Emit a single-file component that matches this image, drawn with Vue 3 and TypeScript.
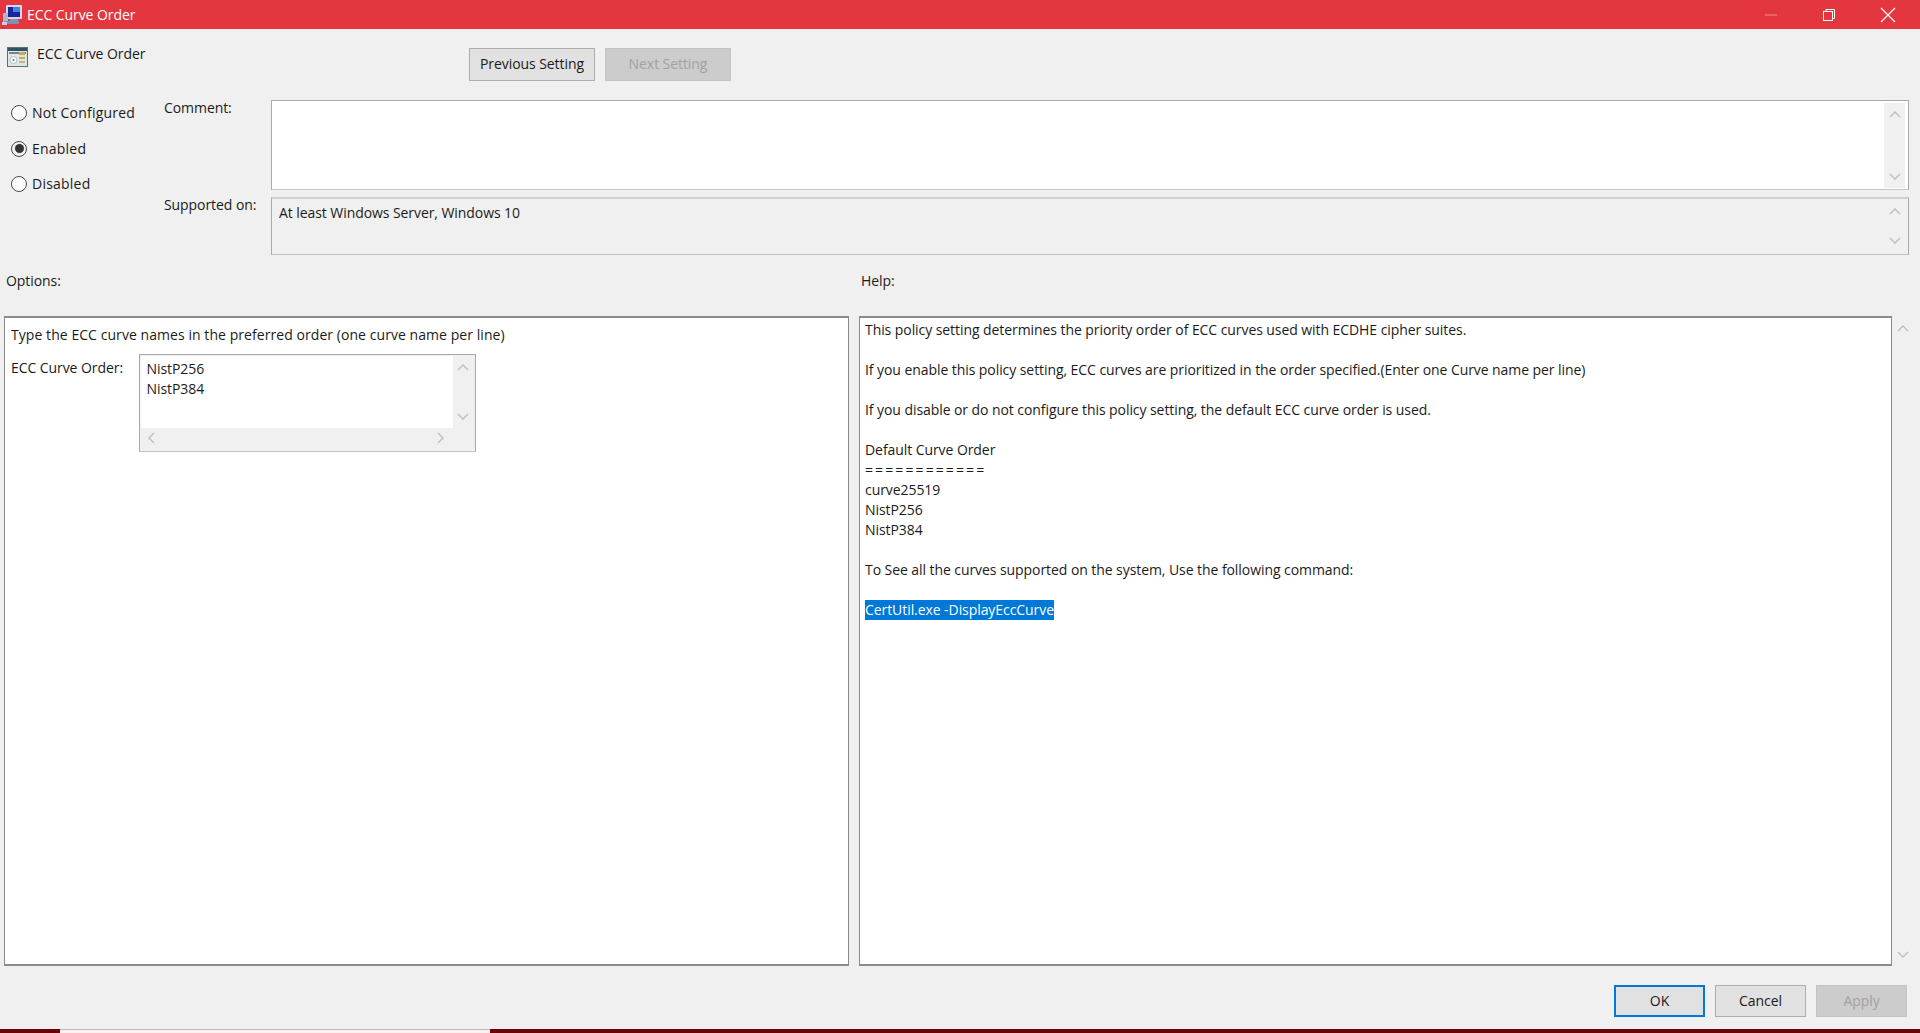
<script setup lang="ts">
const radios = [
  { label: 'Not Configured', checked: false },
  { label: 'Enabled', checked: true },
  { label: 'Disabled', checked: false },
]
const helpLines: string[] = [
  'This policy setting determines the priority order of ECC curves used with ECDHE cipher suites.',
  '',
  'If you enable this policy setting, ECC curves are prioritized in the order specified.(Enter one Curve name per line)',
  '',
  'If you disable or do not configure this policy setting, the default ECC curve order is used.',
  '',
  'Default Curve Order',
  '============',
  'curve25519',
  'NistP256',
  'NistP384',
  '',
  'To See all the curves supported on the system, Use the following command:',
  '',
]
</script>

<template>
  <div class="window">
    <header class="titlebar">
      <svg class="app-icon" width="20" height="20" viewBox="0 0 20 20">
        <rect x="4" y="0" width="16" height="14" rx="1" fill="#d3d8e2" />
        <rect x="6" y="2" width="12" height="10" fill="#17269a" />
        <rect x="11" y="2" width="7" height="5" fill="#3f86e8" />
        <rect x="8" y="14" width="8" height="2" fill="#8c96ad" />
        <rect x="1" y="8" width="5" height="9" fill="#aeb9cf" />
        <rect x="2" y="16" width="15" height="3" rx="1" fill="#7f8fb0" />
        <rect x="0" y="17" width="5" height="3" fill="#c4d2ea" />
      </svg>
      <span class="title">ECC Curve Order</span>
      <div class="controls">
        <span class="ctl">
          <svg width="14" height="14" viewBox="0 0 14 14"><path d="M1 7h12" stroke="#f28b8b" fill="none" /></svg>
        </span>
        <span class="ctl">
          <svg width="14" height="14" viewBox="0 0 14 14" fill="none" stroke="#fff">
            <rect x="1.5" y="3.5" width="9" height="9" />
            <path d="M4 3.5V1.5h8.5V10.5H10.5" />
          </svg>
        </span>
        <span class="ctl">
          <svg width="16" height="16" viewBox="0 0 16 16" fill="none" stroke="#fff" stroke-width="1.2"><path d="M1 1l14 14M15 1L1 15" /></svg>
        </span>
      </div>
    </header>

    <section class="head">
      <svg class="policy-icon" width="21" height="20" viewBox="0 0 21 20">
        <rect x="0.5" y="0.5" width="20" height="19" fill="#dfe6e8" stroke="#56707a" />
        <rect x="1" y="1" width="19" height="3" fill="#33525f" />
        <rect x="2" y="5" width="17" height="2" fill="#6f8790" />
        <rect x="12" y="5" width="6" height="3" fill="#d2a94e" />
        <circle cx="6.5" cy="13" r="3.5" fill="#f7f7f7" stroke="#b7c0c4" />
        <circle cx="6.5" cy="13" r="1" fill="#5d7480" />
        <rect x="12" y="10" width="6" height="2" fill="#c7ab61" />
        <rect x="12" y="14" width="6" height="2" fill="#c9b77d" />
      </svg>
      <span class="policy-name">ECC Curve Order</span>
      <div class="nav">
        <button class="btn">Previous Setting</button>
        <button class="btn disabled">Next Setting</button>
      </div>
    </section>

    <section class="settings">
      <div class="radios">
        <label v-for="r in radios" :key="r.label" class="radio">
          <span class="dot" :class="{ on: r.checked }"></span>
          <span class="radio-text">{{ r.label }}</span>
        </label>
      </div>
      <div class="field-label">Comment:</div>
      <div class="field comment">
        <div class="field-body"></div>
        <div class="vscroll comment-scroll">
          <svg class="chev" width="12" height="7" viewBox="0 0 12 7"><path d="M1 6l5-5 5 5" /></svg>
          <svg class="chev" width="12" height="7" viewBox="0 0 12 7"><path d="M1 1l5 5 5-5" /></svg>
        </div>
      </div>
      <div class="field-label">Supported on:</div>
      <div class="field supported">
        <div class="field-body supported-text">At least Windows Server, Windows 10</div>
        <div class="vscroll supported-scroll">
          <svg class="chev" width="12" height="7" viewBox="0 0 12 7"><path d="M1 6l5-5 5 5" /></svg>
          <svg class="chev" width="12" height="7" viewBox="0 0 12 7"><path d="M1 1l5 5 5-5" /></svg>
        </div>
      </div>
    </section>

    <section class="captions">
      <span class="cap-options">Options:</span>
      <span>Help:</span>
    </section>

    <section class="panels">
      <div class="panel options">
        <div class="opt-intro">Type the ECC curve names in the preferred order (one curve name per line)</div>
        <div class="opt-row">
          <span class="opt-label">ECC Curve Order:</span>
          <div class="listbox">
            <div class="list-body">
              <div>NistP256</div>
              <div>NistP384</div>
            </div>
            <div class="vscroll list-v">
              <svg class="chev" width="12" height="7" viewBox="0 0 12 7"><path d="M1 6l5-5 5 5" /></svg>
              <svg class="chev" width="12" height="7" viewBox="0 0 12 7"><path d="M1 1l5 5 5-5" /></svg>
            </div>
            <div class="hscroll">
              <svg class="chev" width="7" height="12" viewBox="0 0 7 12"><path d="M6 1L1 6l5 5" /></svg>
              <svg class="chev" width="7" height="12" viewBox="0 0 7 12"><path d="M1 1l5 5-5 5" /></svg>
            </div>
          </div>
        </div>
      </div>
      <div class="panel help">
        <div
          v-for="(line, i) in helpLines"
          :key="i"
          class="help-line"
          :class="{ rule: line.startsWith('=') }"
        >{{ line }}</div>
        <div class="help-line"><span class="selected">CertUtil.exe -DisplayEccCurve</span></div>
      </div>
      <div class="vscroll help-scroll">
        <svg class="chev" width="12" height="7" viewBox="0 0 12 7"><path d="M1 6l5-5 5 5" /></svg>
        <svg class="chev" width="12" height="7" viewBox="0 0 12 7"><path d="M1 1l5 5 5-5" /></svg>
      </div>
    </section>

    <footer class="actions">
      <button class="btn act default">OK</button>
      <button class="btn act">Cancel</button>
      <button class="btn act disabled">Apply</button>
    </footer>

    <div class="strip">
      <span class="strip-dark first"></span>
      <span class="strip-light"></span>
      <span class="strip-dark rest"></span>
    </div>
  </div>
</template>

<style scoped>
.window {
  width: 1920px;
  height: 1033px;
  overflow: hidden;
  display: flex;
  flex-direction: column;
  background: #f0f0f0;
  color: #1b1b1b;
  font-family: "Open Sans", "Noto Sans", sans-serif;
  font-size: 14px;
  line-height: 20px;
  letter-spacing: -0.07px;
}
.titlebar {
  height: 29px;
  flex: none;
  display: flex;
  align-items: center;
  background: #e4363e;
  color: #fff;
  padding-left: 2px;
}
.app-icon {
  flex: none;
  margin-right: 5px;
}
.controls {
  margin-left: auto;
  display: flex;
  padding-right: 3px;
}
.ctl {
  width: 58.5px;
  height: 29px;
  display: flex;
  align-items: center;
  justify-content: center;
}
.head {
  height: 71px;
  flex: none;
  display: flex;
  align-items: flex-start;
  padding-left: 7px;
}
.policy-icon {
  margin-top: 18px;
  flex: none;
}
.policy-name {
  margin-left: 9px;
  margin-top: 15px;
}
.nav {
  display: flex;
  gap: 10px;
  margin-left: auto;
  margin-right: 1189px;
  margin-top: 19px;
}
.btn {
  width: 126px;
  height: 33px;
  padding: 0 0 2px;
  border: 1px solid #adadad;
  background: #e1e1e1;
  color: #1b1b1b;
  font: inherit;
  letter-spacing: inherit;
}
.btn.disabled {
  background: #cccccc;
  border-color: #c4c4c4;
  color: #a2a2a2;
}
.settings {
  flex: none;
  display: grid;
  grid-template-columns: 164px 107px 1fr;
  grid-template-rows: 90px 58px;
  row-gap: 7px;
  padding-right: 11px;
}
.radios {
  grid-row: 1 / span 2;
  display: flex;
  flex-direction: column;
  gap: 15.5px;
  padding: 3px 0 0 11px;
}
.radio {
  display: flex;
  align-items: center;
  gap: 5px;
  height: 20px;
}
.radio-text {
  letter-spacing: 0.22px;
}
.dot {
  width: 16px;
  height: 16px;
  box-sizing: border-box;
  border: 1px solid #4a4a4a;
  border-radius: 50%;
  background: #fff;
  display: flex;
  align-items: center;
  justify-content: center;
}
.dot.on {
  background: #f0f0f0;
}
.dot.on::after {
  content: "";
  width: 9px;
  height: 9px;
  border-radius: 50%;
  background: #333;
}
.field-label {
  line-height: 16px;
}
.field {
  display: flex;
  box-sizing: border-box;
  border: 1px solid #a9a9a9;
  border-bottom-color: #c4c4c4;
}
.comment {
  background: #fff;
}
.supported {
  background: #f0f0f0;
  border-top: 2px solid #d0d0d0;
}
.field-body {
  flex: 1;
}
.supported-text {
  padding: 4px 7px;
}
.vscroll {
  flex: none;
  display: flex;
  flex-direction: column;
  justify-content: space-between;
  align-items: center;
  background: #f0f0f0;
  box-sizing: border-box;
}
.chev {
  fill: none;
  stroke: #bdbdbd;
  stroke-width: 1.4;
}
.comment-scroll {
  width: 21px;
  margin: 2px 3px 1px 0;
  padding: 8px 0;
}
.supported-scroll {
  width: 21px;
  margin-right: 3px;
  padding: 9px 0 10px;
}
.captions {
  flex: none;
  display: flex;
  height: 20px;
  margin-top: 16px;
  padding-left: 6px;
}
.cap-options {
  width: 855px;
}
.panels {
  flex: none;
  display: flex;
  height: 650px;
  margin-top: 25px;
  padding-left: 4px;
}
.panel {
  box-sizing: border-box;
  background: #fff;
  border: 2px solid #8a8a8a;
  border-right-width: 1px;
  border-left-width: 1px;
  height: 650px;
}
.options {
  width: 845px;
  padding: 7px 6px;
}
.opt-intro {
  letter-spacing: 0.06px;
}
.help {
  width: 1033px;
  margin-left: 10px;
  padding: 2px 5px;
}
.help-line {
  height: 20px;
  white-space: pre;
}
.help-line.rule {
  letter-spacing: 2.1px;
}
.selected {
  background: #0078d7;
  color: #fff;
  display: inline-block;
}
.help-scroll {
  width: 22px;
  height: 650px;
  padding: 9px 0 8px;
}
.opt-row {
  display: flex;
  align-items: flex-start;
  margin-top: 9px;
}
.opt-label {
  width: 128px;
  margin-top: 4px;
}
.listbox {
  width: 337px;
  height: 98px;
  box-sizing: border-box;
  border: 1px solid #a9a9a9;
  border-bottom-color: #c4c4c4;
  padding: 1px;
  background: #f0f0f0;
  display: grid;
  grid-template-columns: 1fr 21px;
  grid-template-rows: 72px 22px;
}
.list-body {
  background: #fff;
  padding: 3px 5.5px;
}
.list-v {
  padding: 8px 2px 8px 0;
}
.hscroll {
  grid-column: 1 / span 2;
  display: flex;
  justify-content: space-between;
  align-items: center;
  padding: 0 30px 2px 7px;
}
.actions {
  flex: none;
  display: flex;
  gap: 10px;
  justify-content: flex-end;
  margin-top: 19px;
  padding-right: 13px;
}
.act {
  width: 91px;
  height: 32px;
  padding-bottom: 0;
}
.default {
  border: 2px solid #0078d7;
}
.strip {
  flex: none;
  display: flex;
  height: 4px;
  margin-top: 12px;
}
.strip-dark {
  background: #6b0008;
}
.first {
  width: 60px;
}
.rest {
  flex: 1;
}
.strip-light {
  width: 430px;
  box-sizing: border-box;
  background: #fdeeee;
  border-top: 1px solid #b9b9b9;
}
</style>
